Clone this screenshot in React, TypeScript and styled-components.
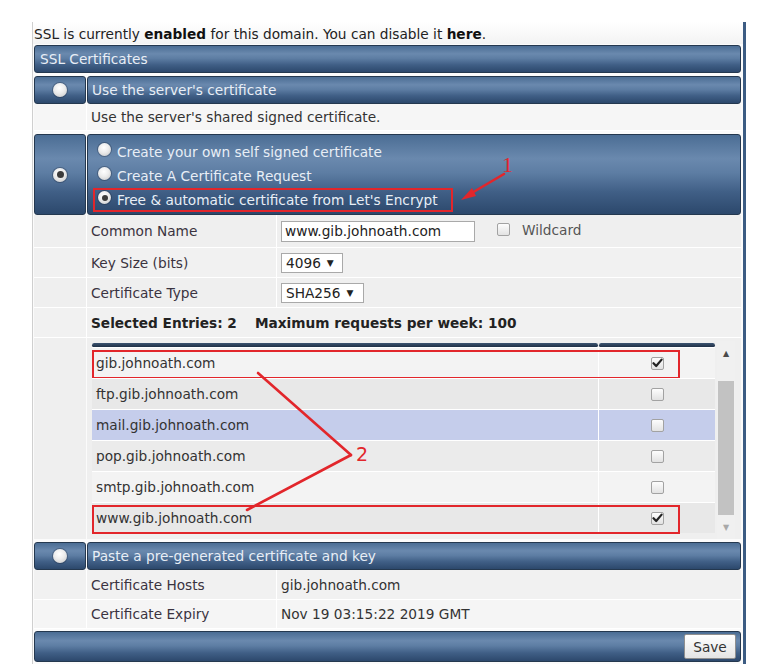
import React from "react";
import styled, { createGlobalStyle, css } from "styled-components";

const FS = "13.7px";

const Global = createGlobalStyle`
  html, body { margin: 0; padding: 0; background: #ffffff; }
  body { font-family: "DejaVu Sans", Verdana, sans-serif; font-size: ${FS}; color: #333; }
  * { box-sizing: border-box; }
`;

const barSkin = css`
  background: linear-gradient(
    to bottom,
    #4b6d94 0%,
    #6a89ae 30%,
    #5d7da3 48%,
    #405f86 72%,
    #2c486c 100%
  );
  border: 1px solid #24384f;
  border-radius: 3px;
  color: #e8eef6;
`;

const Page = styled.div`
  position: relative;
  width: 768px;
  height: 669px;
  padding: 22px 0 0 32px;
  overflow: hidden;
`;

const Panel = styled.div`
  width: 714px;
  border-left: 1px solid #cfcfcf;
  border-right: 3px solid #3c5c83;
  display: flex;
  flex-direction: column;
  padding-bottom: 2px;
  background: #fbfbfb;
`;

const Intro = styled.div`
  height: 22px;
  line-height: 22px;
  padding: 1px 0 0 1px;
  background: linear-gradient(to bottom, #ffffff, #f3f3f3);
  color: #222;
  b { color: #111; }
`;

const TitleBar = styled.div`
  ${barSkin};
  margin: 1px 2px 0 1px;
  height: 28px;
  line-height: 26px;
  padding-left: 5px;
`;

const OptionRow = styled.div<{ $h: number }>`
  display: flex;
  gap: 1px;
  margin: 3px 2px 0 1px;
  height: ${(p) => p.$h}px;
`;

const RadioCell = styled.div`
  ${barSkin};
  width: 52px;
  flex: none;
  display: flex;
  align-items: center;
  justify-content: center;
`;

const OptionBar = styled.div<{ $stack?: boolean }>`
  ${barSkin};
  flex: 1;
  display: flex;
  flex-direction: column;
  justify-content: ${(p) => (p.$stack ? "flex-start" : "center")};
  padding: ${(p) => (p.$stack ? "5px 0 0 5px" : "0 0 0 4px")};
`;

const Choice = styled.div<{ $marked?: boolean }>`
  display: inline-flex;
  align-self: flex-start;
  align-items: center;
  gap: 6px;
  height: 24px;
  padding: 0 13px 0 3px;
  border: 2px solid ${(p) => (p.$marked ? "#e2262b" : "transparent")};
`;

const Radio = styled.span<{ $checked?: boolean; $size?: number }>`
  position: relative;
  flex: none;
  width: ${(p) => p.$size ?? 13}px;
  height: ${(p) => p.$size ?? 13}px;
  border-radius: 50%;
  margin-top: -5px;
  background: radial-gradient(circle at 45% 35%, #ffffff 0%, #ececec 45%, #c4c4c4 100%);
  box-shadow: 0 0 0 1px rgba(30, 40, 60, 0.35);
  ${(p) =>
    p.$checked &&
    css`
      &::after {
        content: "";
        position: absolute;
        inset: 3.5px;
        border-radius: 50%;
        background: #3b3b3b;
      }
    `}
`;

const CellRadio = styled(Radio)`
  margin-top: 0;
`;

const FormRow = styled.div<{ $h: number; $tint?: string }>`
  display: grid;
  grid-template-columns: 52px 189px 1fr;
  column-gap: 1px;
  margin: 0 2px 0 1px;
  height: ${(p) => p.$h}px;
  border-bottom: 1px solid #ffffff;
  background: #ffffff;
  & > * {
    background: ${(p) => p.$tint ?? "#efefef"};
  }
`;

const Blank = styled.div``;

const Label = styled.div`
  display: flex;
  align-items: center;
  padding-left: 4px;
  color: #3a3340;
`;

const Value = styled.div<{ $span?: boolean }>`
  display: flex;
  align-items: center;
  gap: 8px;
  padding-left: 4px;
  color: #333;
  ${(p) => p.$span && css`grid-column: 2 / 4;`}
`;

const TextBox = styled.div`
  width: 194px;
  height: 21px;
  border: 1px solid #a9a9a9;
  background: #ffffff;
  padding-left: 3px;
  line-height: 19px;
  color: #222;
`;

const SelectBox = styled.div<{ $w: number }>`
  width: ${(p) => p.$w}px;
  height: 20px;
  border: 1px solid #a9a9a9;
  background: #ffffff;
  padding-left: 4px;
  line-height: 18px;
  color: #222;
  white-space: nowrap;
  span { font-size: 9px; margin-left: 6px; vertical-align: 2px; }
`;

const Check = styled.span<{ $checked?: boolean }>`
  position: relative;
  flex: none;
  width: 13px;
  height: 13px;
  border: 1px solid #a2a2a2;
  border-radius: 2px;
  background: linear-gradient(to bottom, #fdfdfd, #e2e2e2);
  display: inline-flex;
  align-items: center;
  justify-content: center;
`;

const Wild = styled.label`
  display: inline-flex;
  align-items: center;
  gap: 12px;
  margin-left: 14px;
  margin-top: -3px;
  color: #555;
`;

const Summary = styled.div`
  grid-column: 2 / 4;
  display: flex;
  align-items: center;
  gap: 18px;
  padding-left: 4px;
  font-weight: bold;
  color: #222;
`;

const EntriesRow = styled.div`
  display: grid;
  grid-template-columns: 52px 1fr;
  column-gap: 1px;
  margin: 0 2px 0 1px;
  height: 201px;
  & > * { background: #efefef; }
`;

const EntriesCell = styled.div`
  display: flex;
  gap: 2px;
  padding: 3px 5px 0 5px;
`;

const Table = styled.div`
  width: 623px;
  flex: none;
  display: flex;
  flex-direction: column;
`;

const HeadRow = styled.div`
  display: grid;
  grid-template-columns: 506px 1fr;
  column-gap: 1px;
  height: 6px;
  padding-top: 2px;
  & > span {
    background: linear-gradient(to bottom, #3c5471, #1f3046);
    border-radius: 3px 3px 2px 2px;
  }
`;

const EntryRow = styled.div<{ $bg: string; $marked?: boolean }>`
  position: relative;
  display: grid;
  grid-template-columns: 506px 1fr;
  column-gap: 1px;
  height: 31px;
  border-top: 1px solid #ffffff;
  background: #ffffff;
  & > div { background: ${(p) => p.$bg}; }
  ${(p) =>
    p.$marked &&
    css`
      &::after {
        content: "";
        position: absolute;
        left: 0;
        top: 2px;
        width: 584px;
        height: 25px;
        border: 2px solid #e2262b;
        pointer-events: none;
      }
    `}
`;

const Host = styled.div`
  display: flex;
  align-items: center;
  padding-left: 4px;
  color: #333;
`;

const CheckCell = styled.div`
  display: flex;
  align-items: center;
  justify-content: center;
`;

const Scroll = styled.div`
  width: 18px;
  flex: none;
  display: flex;
  flex-direction: column;
  align-items: center;
  background: #f0f0f0;
  height: 198px;
`;

const ScrollArrow = styled.div<{ $dim?: boolean }>`
  height: 24px;
  display: flex;
  align-items: center;
  justify-content: center;
  color: ${(p) => (p.$dim ? "#a8a8a8" : "#4a4a4a")};
  font-size: 8px;
`;

const Thumb = styled.div`
  width: 16px;
  height: 134px;
  margin-top: 16px;
  background: #c2c2c2;
`;

const Footer = styled.div`
  ${barSkin};
  margin: 2px 2px 0 1px;
  height: 31px;
  display: flex;
  align-items: center;
  justify-content: flex-end;
  padding-right: 4px;
`;

const SaveButton = styled.button`
  width: 52px;
  height: 25px;
  border: 1px solid #8f8f8f;
  border-radius: 2px;
  background: linear-gradient(to bottom, #ffffff, #e4e4e4);
  color: #333;
  font-family: "DejaVu Sans", Verdana, sans-serif;
  font-size: ${FS};
  padding: 0;
`;

const Overlay = styled.svg`
  position: absolute;
  top: 0;
  left: 0;
  pointer-events: none;
`;

const Tick = () => (
  <svg width="11" height="10" viewBox="0 0 11 10">
    <path d="M1.5 5.2 L4.2 8 L9.6 1.6" fill="none" stroke="#222" strokeWidth="2.2" strokeLinecap="round" strokeLinejoin="round" />
  </svg>
);

const hosts = [
  { name: "gib.johnoath.com", bg: "#f3f3f3", checked: true, marked: true },
  { name: "ftp.gib.johnoath.com", bg: "#e8e8e8" },
  { name: "mail.gib.johnoath.com", bg: "#c5cdeb" },
  { name: "pop.gib.johnoath.com", bg: "#ebebeb" },
  { name: "smtp.gib.johnoath.com", bg: "#f3f3f3" },
  { name: "www.gib.johnoath.com", bg: "#e8e8e8", checked: true, marked: true },
];

export default function App() {
  return (
    <Page>
      <Global />
      <Panel>
        <Intro>
          SSL is currently <b>enabled</b> for this domain. You can disable it <b>here</b>.
        </Intro>
        <TitleBar>SSL Certificates</TitleBar>

        <OptionRow $h={28}>
          <RadioCell>
            <CellRadio $size={14} />
          </RadioCell>
          <OptionBar>Use the server's certificate</OptionBar>
        </OptionRow>
        <FormRow $h={27} $tint="#f6f6f6">
          <Blank />
          <Value $span>Use the server's shared signed certificate.</Value>
        </FormRow>

        <OptionRow $h={81}>
          <RadioCell>
            <CellRadio $size={14} $checked />
          </RadioCell>
          <OptionBar $stack>
            <Choice>
              <Radio />
              Create your own self signed certificate
            </Choice>
            <Choice>
              <Radio />
              Create A Certificate Request
            </Choice>
            <Choice $marked>
              <Radio $checked />
              Free &amp; automatic certificate from Let's Encrypt
            </Choice>
          </OptionBar>
        </OptionRow>

        <FormRow $h={33}>
          <Blank />
          <Label>Common Name</Label>
          <Value>
            <TextBox>www.gib.johnoath.com</TextBox>
            <Wild>
              <Check />
              Wildcard
            </Wild>
          </Value>
        </FormRow>
        <FormRow $h={30} $tint="#f1f1f1">
          <Blank />
          <Label>Key Size (bits)</Label>
          <Value>
            <SelectBox $w={62}>
              4096<span>▼</span>
            </SelectBox>
          </Value>
        </FormRow>
        <FormRow $h={30}>
          <Blank />
          <Label>Certificate Type</Label>
          <Value>
            <SelectBox $w={83}>
              SHA256<span>▼</span>
            </SelectBox>
          </Value>
        </FormRow>
        <FormRow $h={30} $tint="#f1f1f1">
          <Blank />
          <Summary>
            <span>Selected Entries: 2</span>
            <span>Maximum requests per week: 100</span>
          </Summary>
        </FormRow>

        <EntriesRow>
          <Blank />
          <EntriesCell>
            <Table>
              <HeadRow>
                <span />
                <span />
              </HeadRow>
              {hosts.map((h) => (
                <EntryRow key={h.name} $bg={h.bg} $marked={h.marked}>
                  <Host>{h.name}</Host>
                  <CheckCell>
                    <Check $checked={h.checked}>{h.checked && <Tick />}</Check>
                  </CheckCell>
                </EntryRow>
              ))}
            </Table>
            <Scroll>
              <ScrollArrow>▲</ScrollArrow>
              <Thumb />
              <ScrollArrow $dim>▼</ScrollArrow>
            </Scroll>
          </EntriesCell>
        </EntriesRow>

        <OptionRow $h={28}>
          <RadioCell>
            <CellRadio $size={14} />
          </RadioCell>
          <OptionBar>Paste a pre-generated certificate and key</OptionBar>
        </OptionRow>
        <FormRow $h={30} $tint="#f1f1f1">
          <Blank />
          <Label>Certificate Hosts</Label>
          <Value>gib.johnoath.com</Value>
        </FormRow>
        <FormRow $h={29} $tint="#f5f5f5">
          <Blank />
          <Label>Certificate Expiry</Label>
          <Value>Nov 19 03:15:22 2019 GMT</Value>
        </FormRow>

        <Footer>
          <SaveButton>Save</SaveButton>
        </Footer>
      </Panel>

      <Overlay width={768} height={669} viewBox="0 0 768 669">
        <g stroke="#e2262b" strokeWidth="2.6" fill="none" strokeLinecap="round">
          <line x1="504" y1="174" x2="470" y2="194" />
          <line x1="258" y1="373" x2="351" y2="455" />
          <line x1="351" y1="455" x2="247" y2="510" />
        </g>
        <polygon points="461,200 472,188 476,196" fill="#e2262b" />
        <text x="502" y="172" fill="#e2262b" fontFamily="'Liberation Serif', serif" fontSize="22">1</text>
        <text x="356" y="461" fill="#e2262b" fontFamily="'DejaVu Sans', sans-serif" fontSize="19">2</text>
      </Overlay>
    </Page>
  );
}
